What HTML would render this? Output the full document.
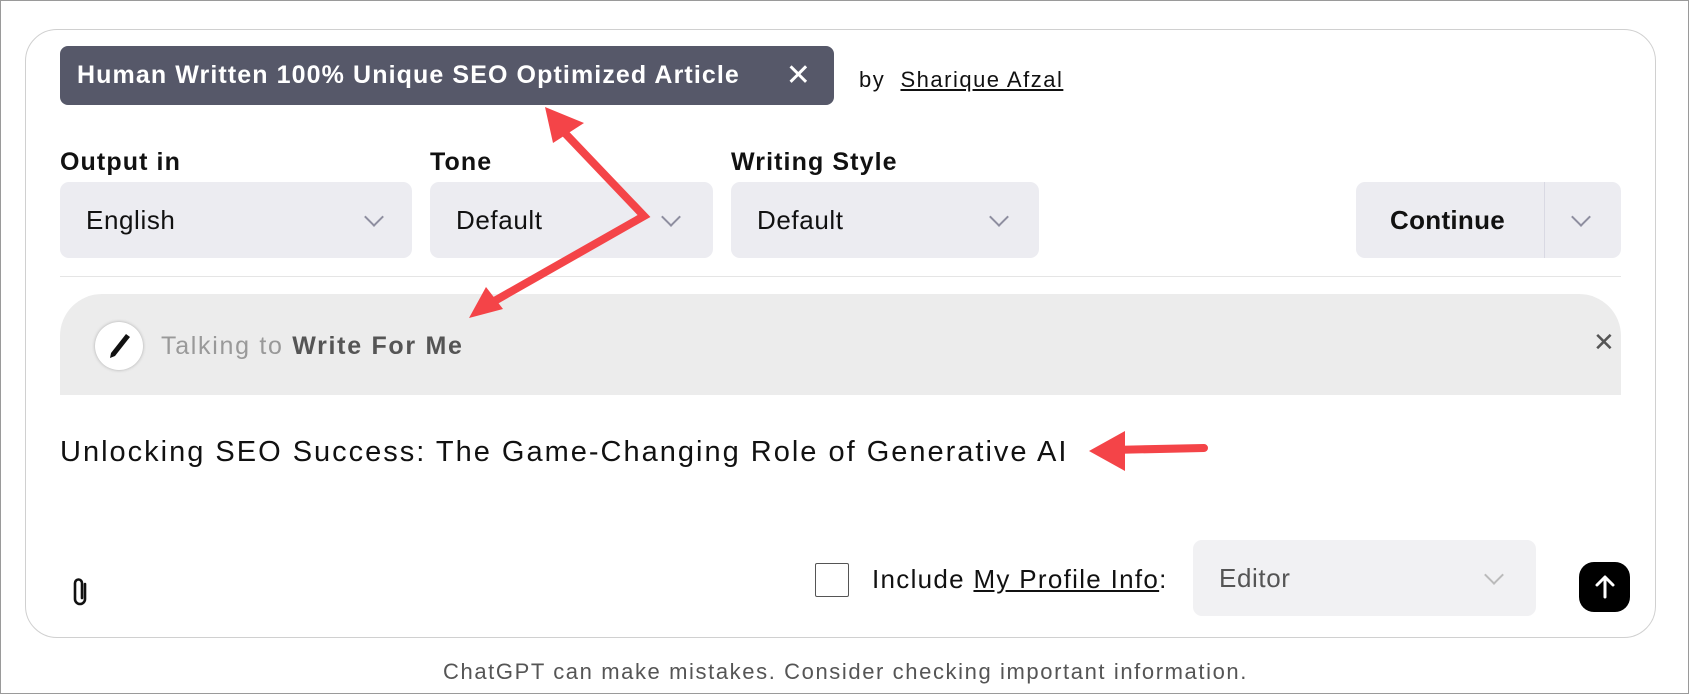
<!DOCTYPE html>
<html><head><meta charset="utf-8"><style>
*{box-sizing:border-box;margin:0;padding:0}
body{width:1689px;height:694px;background:#fff;font-family:"Liberation Sans",sans-serif;position:relative;overflow:hidden;border:1px solid #9a9a9a}
.a{position:absolute;white-space:nowrap}
.card{left:24px;top:28px;width:1631px;height:609px;border:1px solid #d0d0d0;border-radius:32px}
.chip{left:59px;top:45px;width:774px;height:59px;background:#565869;border-radius:8px;color:#fff;font-weight:bold;font-size:25px;line-height:59px;padding-left:17px;letter-spacing:1.1px}
.lbl{font-size:25px;font-weight:bold;color:#111;top:147px;letter-spacing:1.1px}
.dd{top:181px;height:76px;background:#ececf1;border-radius:9px;font-size:26px;line-height:76px;padding-left:26px;color:#111;letter-spacing:0.6px}
.chev{position:absolute;top:28px;width:14px;height:14px;border-right:2px solid #8e8ea0;border-bottom:2px solid #8e8ea0;transform:rotate(45deg)}
</style></head><body>
<div class="a card"></div>
<div class="a chip">Human Written 100% Unique SEO Optimized Article<span style="position:absolute;right:22px;font-weight:normal;font-size:30px">✕</span></div>
<div class="a" style="left:858px;top:66px;font-size:22px;color:#111;letter-spacing:1.5px">by &nbsp;<u>Sharique Afzal</u></div>
<div class="a lbl" style="left:59px">Output in</div>
<div class="a lbl" style="left:429px">Tone</div>
<div class="a lbl" style="left:730px">Writing Style</div>
<div class="a dd" style="left:59px;width:352px">English<span class="chev" style="left:307px"></span></div>
<div class="a dd" style="left:429px;width:283px">Default<span class="chev" style="left:234px"></span></div>
<div class="a dd" style="left:730px;width:308px">Default<span class="chev" style="left:261px"></span></div>
<div class="a dd" style="left:1355px;width:265px;padding-left:34px;font-weight:bold;letter-spacing:0.3px">Continue<span style="position:absolute;left:188px;top:0;width:1px;height:76px;background:#d9d9e3"></span><span class="chev" style="left:218px"></span></div>
<div class="a" style="left:59px;top:275px;width:1561px;height:1px;background:#e5e5e5"></div>
<div class="a" style="left:59px;top:293px;width:1561px;height:101px;background:#ececec;border-radius:42px 42px 0 0"></div>
<div class="a" style="left:94px;top:321px;width:48px;height:48px;border-radius:50%;background:#fff;box-shadow:0 0 3px #aaa"></div>
<svg class="a" style="left:100px;top:327px" width="36" height="36" viewBox="0 0 36 36"><path d="M25 6 L29 9 L14 28 L9 30 L10 25 Z" fill="#111"/></svg>
<div class="a" style="left:160px;top:331px;font-size:25px;color:#999;letter-spacing:1.7px">Talking to <b style="color:#555">Write For Me</b></div>
<div class="a" style="left:1592px;top:326px;font-size:26px;color:#555">✕</div>
<div class="a" style="left:59px;top:435px;font-size:29px;color:#111;letter-spacing:2px">Unlocking SEO Success: The Game-Changing Role of Generative AI</div>
<svg class="a" style="left:0;top:0" width="1689" height="694">
<g stroke="#f44448" stroke-width="8" stroke-linecap="round" fill="none"><path d="M560 128 L643 215 L490 302"/><path d="M1203 447 L1110 449"/></g>
<g fill="#f44448"><path d="M544 106 L583 122 L552 142 Z"/><path d="M468 317 L485 286 L502 308 Z"/><path d="M1088 450 L1124 430 L1124 470 Z"/></g>
</svg>
<svg class="a" style="left:66px;top:574px" width="28" height="34" viewBox="0 0 28 34"><path d="M18 9 V24 a5 5 0 0 1 -10 0 V8 a3.5 3.5 0 0 1 7 0 V23" fill="none" stroke="#111" stroke-width="2.6" stroke-linecap="round"/></svg>
<div class="a" style="left:814px;top:562px;width:34px;height:34px;border:1.5px solid #555;border-radius:2px"></div>
<div class="a" style="left:871px;top:563px;font-size:26px;color:#111;letter-spacing:1.3px">Include <u>My Profile Info</u>:</div>
<div class="a dd" style="left:1192px;top:539px;width:343px;background:#f1f1f3;color:#555;padding-left:26px">Editor<span class="chev" style="left:294px;border-color:#bbb"></span></div>
<div class="a" style="left:1578px;top:561px;width:51px;height:50px;background:#000;border-radius:15px"></div>
<svg class="a" style="left:1590px;top:572px" width="28" height="28" viewBox="0 0 28 28"><path d="M14 24 V5 M6 12 L14 4 L22 12" fill="none" stroke="#fff" stroke-width="3" stroke-linecap="round" stroke-linejoin="round"/></svg>
<div class="a" style="left:0;width:1689px;top:658px;text-align:center;font-size:22px;color:#555;letter-spacing:1.6px">ChatGPT can make mistakes. Consider checking important information.</div>
</body></html>
